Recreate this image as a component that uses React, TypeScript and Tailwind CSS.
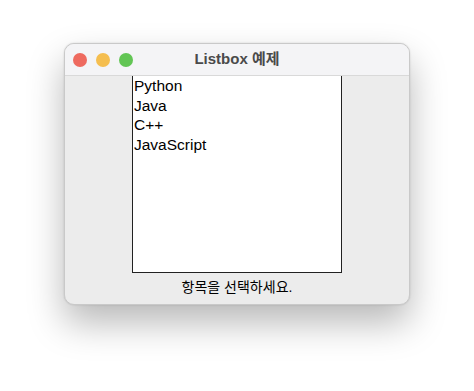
const items = ["Python", "Java", "C++", "JavaScript"]

export default function App() {
  return (
    <div
      className="w-[474px] h-[391px] bg-white pt-[43px] pl-[64px]"
      style={{ fontFamily: '"Liberation Sans", "Noto Sans CJK KR", sans-serif' }}
    >
      <div className="w-[346px] h-[262px] rounded-[10px] bg-[#ececec] border border-[#c9c9c9] shadow-[0_18px_36px_rgba(0,0,0,0.28),0_0_2px_rgba(0,0,0,0.15)] flex flex-col overflow-hidden">
        {/* title bar */}
        <div className="h-[32px] shrink-0 bg-[#f4f4f6] border-b border-[#d9d9d9] flex items-center px-[8px] relative">
          <div className="flex gap-[9px]">
            <span className="w-[14px] h-[14px] rounded-full bg-[#ee6a5f]" />
            <span className="w-[14px] h-[14px] rounded-full bg-[#f5be4f]" />
            <span className="w-[14px] h-[14px] rounded-full bg-[#62c554]" />
          </div>
          <div className="absolute inset-0 flex items-center justify-center text-[15px] font-bold text-[#4a4a4a]">
            Listbox 예제
          </div>
        </div>
        {/* body */}
        <div className="flex flex-col items-center">
          <div className="w-[210px] h-[198px] bg-white border-[1.5px] border-[#222] -mt-px">
            {items.map((item) => (
              <div key={item} className="text-[15.5px] leading-[19.5px] text-black pl-[1px]">
                {item}
              </div>
            ))}
          </div>
          <div className="mt-[4px] text-[14px] leading-[20px] text-black">항목을 선택하세요.</div>
        </div>
      </div>
    </div>
  )
}
